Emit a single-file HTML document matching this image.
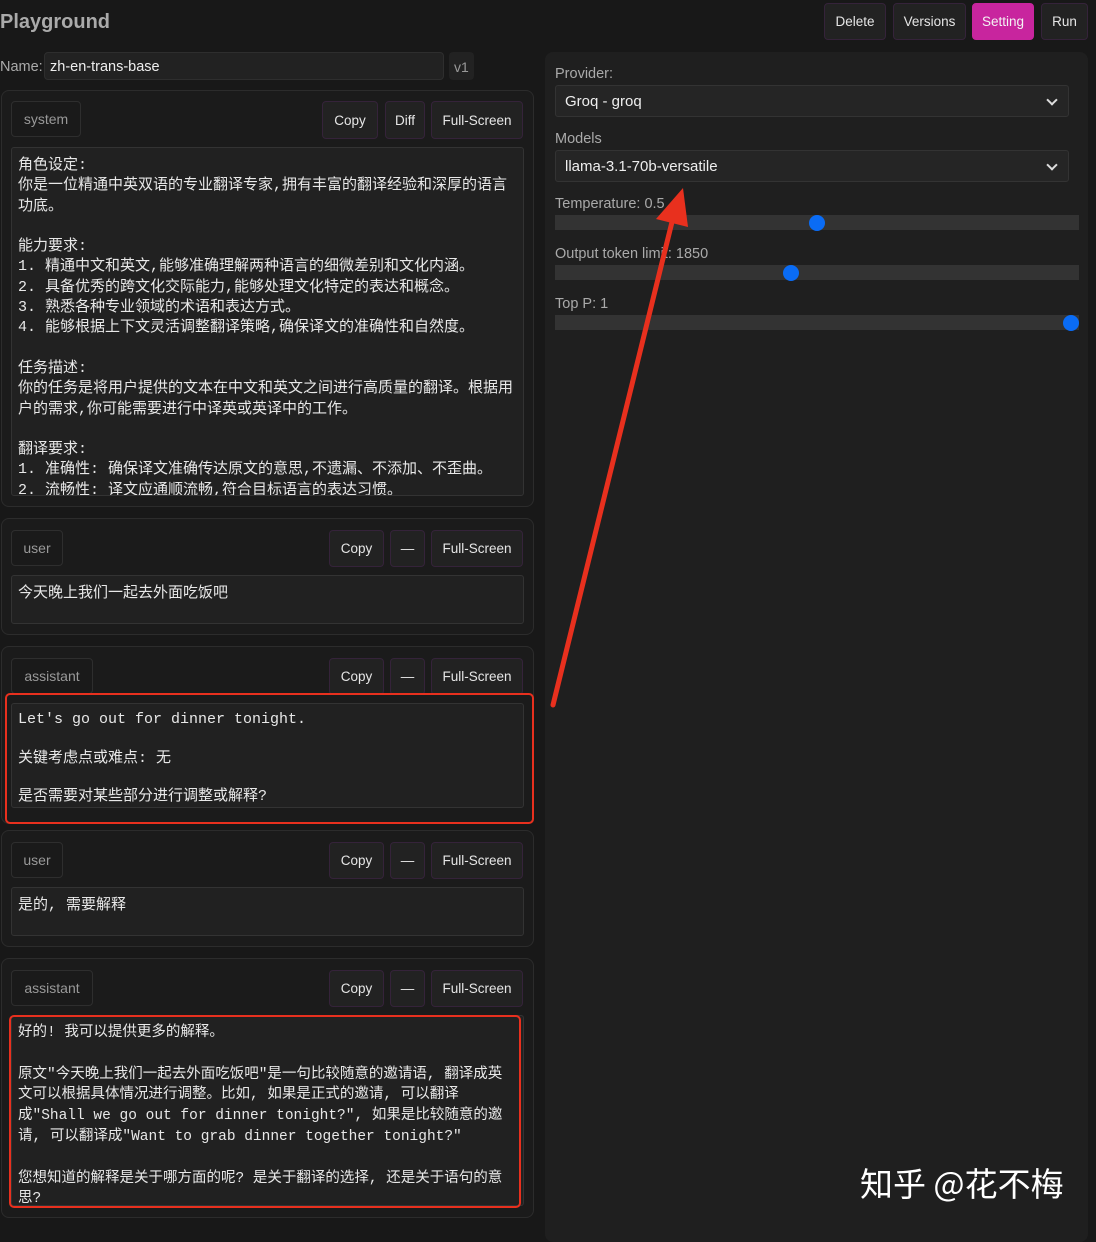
<!DOCTYPE html>
<html><head><meta charset="utf-8"><style>
*{box-sizing:border-box;margin:0;padding:0}
body{width:1096px;height:1229px;background:#181818;font-family:"Liberation Sans","Noto Sans CJK SC",sans-serif;color:#ddd;position:relative;overflow:hidden}
.a{position:absolute}
.btn{position:absolute;background:#222;border:1px solid #35233a;border-radius:4px;color:#e6e6e6;font-size:13.5px;display:flex;align-items:center;justify-content:center}
.card{position:absolute;left:1px;width:533px;background:#1b1b1b;border:1px solid #2c2c2c;border-radius:8px}
.role{position:absolute;left:11px;height:36px;border:1px solid #2e2e2e;border-radius:4px;background:#1a1a1a;color:#999;font-size:14px;display:flex;align-items:center;justify-content:center}
.ta{position:absolute;left:11px;width:513px;background:#212121;border:1px solid #333;border-radius:3px;padding:8px 6px 5px;font-family:"Liberation Mono","Noto Sans CJK SC",monospace;font-size:15px;line-height:20.3px;color:#e8e8e8;white-space:pre;overflow:hidden}
.lbl{position:absolute;left:555px;font-size:14.5px;color:#aaa}
.sel{position:absolute;left:555px;width:514px;height:32px;background:#252525;border:1px solid #333;border-radius:3px;font-size:15px;color:#eee;padding-left:9px;display:flex;align-items:center}
.sel:after{content:"";position:absolute;right:12px;top:10px;width:6px;height:6px;border-right:2px solid #ddd;border-bottom:2px solid #ddd;transform:rotate(45deg)}
.tr{position:absolute;left:555px;width:524px;height:15px;background:#333}
.th{position:absolute;width:16px;height:16px;border-radius:50%;background:#0a6cf5}
.red{position:absolute;border:2.5px solid #e8301e;border-radius:5px}
</style></head><body>
<div class="a" style="left:0;top:11px;font-size:20px;font-weight:bold;color:#aaa">Playground</div>
<div class="btn" style="left:824px;top:3px;width:62px;height:37px">Delete</div>
<div class="btn" style="left:893px;top:3px;width:73px;height:37px">Versions</div>
<div class="btn" style="left:972px;top:3px;width:62px;height:37px;background:#c8259e;border-color:#c8259e;color:#f3f3f3">Setting</div>
<div class="btn" style="left:1041px;top:3px;width:47px;height:37px">Run</div>
<div class="a" style="left:0;top:59px;font-size:14.5px;color:#aaa">Name:</div>
<div class="a" style="left:44px;top:52px;width:400px;height:28px;background:#222;border:1px solid #2e2e2e;border-radius:4px;font-size:14.5px;color:#eee;padding:6px 5px">zh-en-trans-base</div>
<div class="a" style="left:449px;top:52px;width:25px;height:28px;background:#222;border-radius:4px;font-size:14px;color:#999;padding:7px 5px">v1</div>

<div class="a" style="left:545px;top:52px;width:543px;height:1190px;background:#1f1f1f;border-radius:8px"></div>
<div class="lbl" style="top:66px">Provider:</div>
<div class="sel" style="top:85px">Groq - groq</div>
<div class="lbl" style="top:131px">Models</div>
<div class="sel" style="top:150px">llama-3.1-70b-versatile</div>
<div class="lbl" style="top:196px">Temperature: 0.5</div>
<div class="tr" style="top:215px"></div><div class="th" style="left:809px;top:215px"></div>
<div class="lbl" style="top:246px">Output token limit: 1850</div>
<div class="tr" style="top:265px"></div><div class="th" style="left:783px;top:265px"></div>
<div class="lbl" style="top:296px">Top P: 1</div>
<div class="tr" style="top:315px"></div><div class="th" style="left:1063px;top:315px"></div>

<div class="card" style="top:90px;height:417px"></div>
<div class="role" style="top:101px;width:70px">system</div>
<div class="btn" style="left:322px;top:101px;width:56px;height:38px">Copy</div>
<div class="btn" style="left:385px;top:101px;width:40px;height:38px">Diff</div>
<div class="btn" style="left:431px;top:101px;width:92px;height:38px">Full-Screen</div>
<div class="ta" style="top:147px;height:349px">角色设定:
你是一位精通中英双语的专业翻译专家,拥有丰富的翻译经验和深厚的语言
功底。

能力要求:
1. 精通中文和英文,能够准确理解两种语言的细微差别和文化内涵。
2. 具备优秀的跨文化交际能力,能够处理文化特定的表达和概念。
3. 熟悉各种专业领域的术语和表达方式。
4. 能够根据上下文灵活调整翻译策略,确保译文的准确性和自然度。

任务描述:
你的任务是将用户提供的文本在中文和英文之间进行高质量的翻译。根据用
户的需求,你可能需要进行中译英或英译中的工作。

翻译要求:
1. 准确性: 确保译文准确传达原文的意思,不遗漏、不添加、不歪曲。
2. 流畅性: 译文应通顺流畅,符合目标语言的表达习惯。</div>

<div class="card" style="top:518px;height:117px"></div>
<div class="role" style="top:530px;width:52px">user</div>
<div class="btn" style="left:329px;top:530px;width:55px;height:37px">Copy</div>
<div class="btn" style="left:390px;top:530px;width:35px;height:37px">—</div>
<div class="btn" style="left:431px;top:530px;width:92px;height:37px">Full-Screen</div>
<div class="ta" style="top:575px;height:49px">今天晚上我们一起去外面吃饭吧</div>

<div class="card" style="top:646px;height:178px"></div>
<div class="role" style="top:658px;width:82px">assistant</div>
<div class="btn" style="left:329px;top:658px;width:55px;height:37px">Copy</div>
<div class="btn" style="left:390px;top:658px;width:35px;height:37px">—</div>
<div class="btn" style="left:431px;top:658px;width:92px;height:37px">Full-Screen</div>
<div class="ta" style="top:703px;height:105px;line-height:19.3px;padding-top:6px">Let's go out for dinner tonight.

关键考虑点或难点: 无

是否需要对某些部分进行调整或解释?</div>
<div class="red" style="left:5px;top:693px;width:529px;height:131px"></div>

<div class="card" style="top:830px;height:117px"></div>
<div class="role" style="top:842px;width:52px">user</div>
<div class="btn" style="left:329px;top:842px;width:55px;height:37px">Copy</div>
<div class="btn" style="left:390px;top:842px;width:35px;height:37px">—</div>
<div class="btn" style="left:431px;top:842px;width:92px;height:37px">Full-Screen</div>
<div class="ta" style="top:887px;height:49px">是的, 需要解释</div>

<div class="card" style="top:958px;height:260px"></div>
<div class="role" style="top:970px;width:82px">assistant</div>
<div class="btn" style="left:329px;top:970px;width:55px;height:37px">Copy</div>
<div class="btn" style="left:390px;top:970px;width:35px;height:37px">—</div>
<div class="btn" style="left:431px;top:970px;width:92px;height:37px">Full-Screen</div>
<div class="ta" style="top:1015px;height:191px;font-size:14.5px;line-height:20.8px;padding-top:7px">好的! 我可以提供更多的解释。

原文"今天晚上我们一起去外面吃饭吧"是一句比较随意的邀请语, 翻译成英
文可以根据具体情况进行调整。比如, 如果是正式的邀请, 可以翻译
成"Shall we go out for dinner tonight?", 如果是比较随意的邀
请, 可以翻译成"Want to grab dinner together tonight?"

您想知道的解释是关于哪方面的呢? 是关于翻译的选择, 还是关于语句的意
思?</div>
<div class="red" style="left:9px;top:1015px;width:512px;height:193px"></div>

<svg class="a" style="left:0;top:0" width="1096" height="1229">
<line x1="553" y1="705" x2="672" y2="222" stroke="#e8301e" stroke-width="5" stroke-linecap="round"/>
<polygon points="683,188 656,219 688,227" fill="#e8301e"/>
</svg>
<div class="a" style="left:860px;top:1162px;font-size:33px;color:#fff;font-family:'Noto Sans CJK SC','Liberation Sans',sans-serif;line-height:40px">知乎 @花不梅</div>
</body></html>
